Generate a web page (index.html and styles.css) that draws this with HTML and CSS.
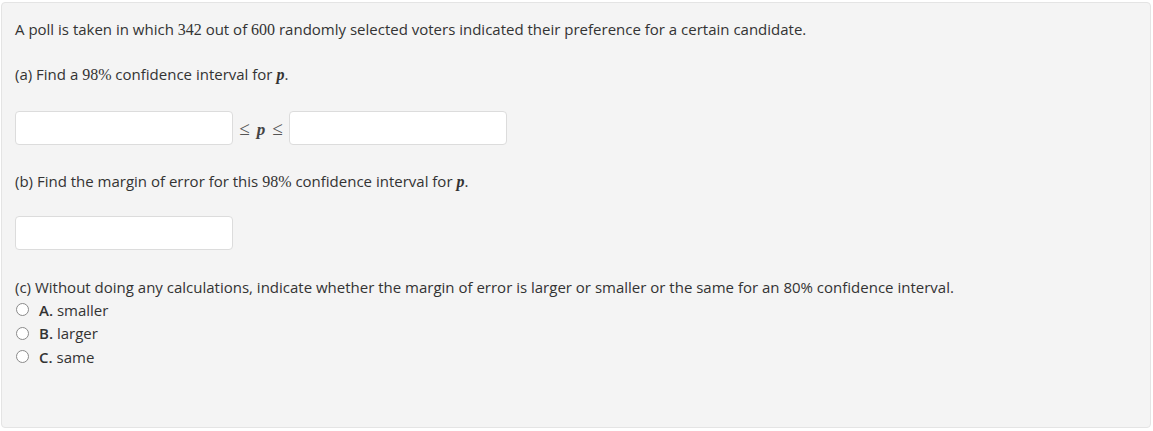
FILE: index.html
```html
<!DOCTYPE html>
<html>
<head>
<meta charset="utf-8">
<link rel="stylesheet" href="styles.css">
</head>
<body>
<div class="panel">
  <p class="q first">A poll is taken in which <span class="m">342</span> out of <span class="m">600</span> randomly selected voters indicated their preference for a certain candidate.</p>
  <p class="q qa">(a) Find a <span class="m">98%</span> confidence interval for <span class="m mi">p</span>.</p>
  <div class="interval">
    <input class="box" type="text">
    <span class="rel"><span class="m">≤</span><span class="m mi">p</span><span class="m">≤</span></span>
    <input class="box" type="text">
  </div>
  <p class="q">(b) Find the margin of error for this <span class="m">98%</span> confidence interval for <span class="m mi">p</span>.</p>
  <div class="single">
    <input class="box" type="text">
  </div>
  <p class="q">(c) Without doing any calculations, indicate whether the margin of error is larger or smaller or the same for an 80% confidence interval.</p>
  <ul class="opts">
    <li><span class="radio"></span><b>A.</b>&nbsp;smaller</li>
    <li><span class="radio"></span><b>B.</b>&nbsp;larger</li>
    <li><span class="radio"></span><b>C.</b>&nbsp;same</li>
  </ul>
</div>
</body>
</html>
```
FILE: styles.css
```css
html, body {
  margin: 0;
  padding: 0;
  background: #ffffff;
}
body {
  padding: 2px 2px 1px 1px;
  font-family: "Open Sans", "Noto Sans", sans-serif;
  font-size: 15px;
  color: #333333;
}
.panel {
  background: #f4f4f4;
  border: 1px solid #e4e4e4;
  border-radius: 4px;
  height: 426px;
  box-sizing: border-box;
  padding: 0 13px;
}
.q {
  margin: 0;
  line-height: 20px;
}
.first {
  padding-top: 16px;
}
.qa {
  margin-top: 25px;
}
.m {
  font-family: "Liberation Serif", "DejaVu Serif", serif;
  font-size: 16px;
  line-height: 1;
}
.mi {
  font-style: italic;
  font-weight: bold;
}
.interval, .single {
  display: flex;
  align-items: center;
  margin: 27px 0 26px;
}
.box {
  width: 218px;
  height: 34px;
  box-sizing: border-box;
  border: 1px solid #dcdcdc;
  border-radius: 4px;
  background: #ffffff;
  margin: 0;
  padding: 0 6px;
}
.rel {
  width: 56px;
  display: flex;
  justify-content: center;
  align-items: baseline;
  gap: 7px;
  color: #555;
}
.rel .m { font-size: 19px; }
.rel .mi { font-size: 17px; color: #444; }
.single { margin-top: 25px; margin-bottom: 27px; }
.opts {
  list-style: none;
  margin: 1px 0 0;
  padding: 0;
}
.opts li {
  display: flex;
  align-items: center;
  height: 23.5px;
}
.opts b { font-weight: 600; }
.radio {
  width: 13px;
  height: 13px;
  box-sizing: border-box;
  border: 1px solid #8a8a8a;
  border-radius: 50%;
  background: #fff;
  margin: 0 10px 0 1px;
}
```
